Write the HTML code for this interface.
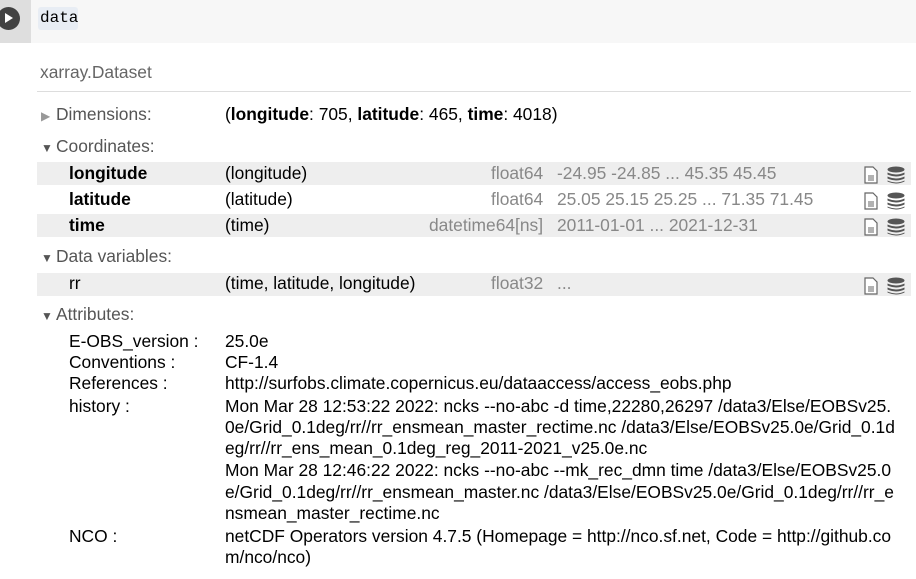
<!DOCTYPE html>
<html><head><meta charset="utf-8"><style>
body{margin:0;width:916px;height:579px;background:#fff;font-family:"Liberation Sans",Arial,sans-serif;font-size:17.4px;color:#000;position:relative;overflow:hidden}
.t{position:absolute;line-height:22px;height:22px;white-space:nowrap}
.g{color:#555}
.s{color:#888}
.row{position:absolute;left:37px;width:874px;height:23px;background:#eee}
b{font-weight:bold}
.ic{position:absolute}
.a{font-size:12px;display:inline-block;width:15px}
</style></head><body>
<div style="position:absolute;left:0;top:0;width:31px;height:43px;background:#dedede"></div>
<div style="position:absolute;left:31px;top:0;width:885px;height:43px;background:#f7f7f7"></div>
<div style="position:absolute;left:-3px;top:7px;width:23px;height:23px;border-radius:50%;background:#424242"></div>
<div style="position:absolute;left:5px;top:13px;width:0;height:0;border-top:5.5px solid transparent;border-bottom:5.5px solid transparent;border-left:8px solid #fff"></div>
<div style="position:absolute;left:38px;top:7px;width:40px;height:23px;background:#e8edf4;border-radius:3px"></div>
<div class="t" style="left:40px;top:7px;font-family:'Liberation Mono',monospace;font-size:16px">data</div>

<div class="t g" style="left:40px;top:61px;color:#666">xarray.Dataset</div>
<div style="position:absolute;left:37px;top:91px;width:874px;height:1px;background:#ddd"></div>

<div class="t g" style="left:41px;top:103px"><span class="a" style="color:#999">▶</span>Dimensions:</div>
<div class="t" style="left:225px;top:103px">(<b>longitude</b>: 705, <b>latitude</b>: 465, <b>time</b>: 4018)</div>

<div class="t g" style="left:41px;top:135px"><span class="a">▼</span>Coordinates:</div>
<div class="row" style="top:162px"></div>
<div class="row" style="top:214px"></div>
<div class="t" style="left:69px;top:162px"><b>longitude</b></div>
<div class="t" style="left:225px;top:162px">(longitude)</div>
<div class="t s" style="left:491px;top:162px">float64</div>
<div class="t s" style="left:557px;top:162px">-24.95 -24.85 ... 45.35 45.45</div>
<div class="t" style="left:69px;top:188px"><b>latitude</b></div>
<div class="t" style="left:225px;top:188px">(latitude)</div>
<div class="t s" style="left:491px;top:188px">float64</div>
<div class="t s" style="left:557px;top:188px">25.05 25.15 25.25 ... 71.35 71.45</div>
<div class="t" style="left:69px;top:214px"><b>time</b></div>
<div class="t" style="left:225px;top:214px">(time)</div>
<div class="t s" style="left:429px;top:214px">datetime64[ns]</div>
<div class="t s" style="left:557px;top:214px">2011-01-01 ... 2021-12-31</div>

<div class="t g" style="left:41px;top:245px"><span class="a">▼</span>Data variables:</div>
<div class="row" style="top:273px"></div>
<div class="t" style="left:69px;top:272px">rr</div>
<div class="t" style="left:225px;top:272px">(time, latitude, longitude)</div>
<div class="t s" style="left:491px;top:272px">float32</div>
<div class="t s" style="left:557px;top:272px">...</div>

<svg class="ic" style="left:860px;top:165px" width="50" height="135">
<defs><g id="ic">
<path d="M5 2h8l4 4v12H5z" fill="#fff" stroke="#666" stroke-width="1.2"/>
<path d="M8 11h6M8 13h6M8 15h6" stroke="#666" stroke-width="1"/>
<ellipse cx="36" cy="4.5" rx="8.5" ry="3" fill="#555"/>
<path d="M27.5 7.5q8.5 4 17 0v2q-8.5 4-17 0zM27.5 11.5q8.5 4 17 0v2q-8.5 4-17 0zM27.5 15.5q8.5 4 17 0v1q-8.5 4-17 0z" fill="#555"/>
</g></defs>
<use href="#ic" y="0"/><use href="#ic" y="26"/><use href="#ic" y="52"/><use href="#ic" y="111"/>
</svg>

<div class="t g" style="left:41px;top:303px"><span class="a">▼</span>Attributes:</div>
<div class="t" style="left:69px;top:330px">E-OBS_version :</div>
<div class="t" style="left:225px;top:330px">25.0e</div>
<div class="t" style="left:69px;top:351px">Conventions :</div>
<div class="t" style="left:225px;top:351px">CF-1.4</div>
<div class="t" style="left:69px;top:372px">References :</div>
<div class="t" style="left:225px;top:372px">http://surfobs.climate.copernicus.eu/dataaccess/access_eobs.php</div>
<div class="t" style="left:69px;top:395px">history :</div>
<div class="t" style="left:225px;top:395px">Mon Mar 28 12:53:22 2022: ncks --no-abc -d time,22280,26297 /data3/Else/EOBSv25.</div>
<div class="t" style="left:225px;top:416px">0e/Grid_0.1deg/rr//rr_ensmean_master_rectime.nc /data3/Else/EOBSv25.0e/Grid_0.1d</div>
<div class="t" style="left:225px;top:437px">eg/rr//rr_ens_mean_0.1deg_reg_2011-2021_v25.0e.nc</div>
<div class="t" style="left:225px;top:459px">Mon Mar 28 12:46:22 2022: ncks --no-abc --mk_rec_dmn time /data3/Else/EOBSv25.0</div>
<div class="t" style="left:225px;top:481px">e/Grid_0.1deg/rr//rr_ensmean_master.nc /data3/Else/EOBSv25.0e/Grid_0.1deg/rr//rr_e</div>
<div class="t" style="left:225px;top:502px">nsmean_master_rectime.nc</div>
<div class="t" style="left:69px;top:525px">NCO :</div>
<div class="t" style="left:225px;top:525px">netCDF Operators version 4.7.5 (Homepage = http://nco.sf.net, Code = http://github.co</div>
<div class="t" style="left:225px;top:546px">m/nco/nco)</div>
</body></html>
